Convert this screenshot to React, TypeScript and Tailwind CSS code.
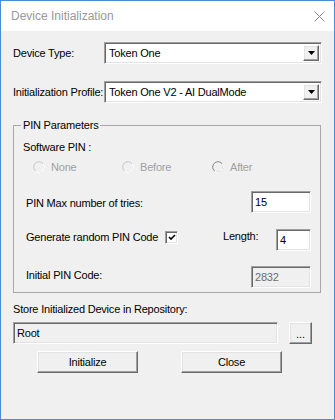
import React from "react";

const font = { fontFamily: '"Liberation Sans", Arial, sans-serif' };

const sunken =
  "border border-t-[#a0a0a0] border-l-[#a0a0a0] border-r-white border-b-white shadow-[inset_1px_1px_0_#696969,inset_-1px_-1px_0_#e3e3e3]";
const raised =
  "border border-t-white border-l-white border-r-[#696969] border-b-[#696969] shadow-[inset_-1px_-1px_0_#a0a0a0,inset_1px_1px_0_#e3e3e3]";
const txt = "text-[11px] leading-[13px] tracking-[-0.2px]";

function Combo({ value }: { value: string }) {
  return (
    <div className={`flex items-center w-[218px] h-[22px] bg-white ${sunken} pl-[4px] pr-[2px]`}>
      <span className={`flex-1 ${txt} text-black`}>{value}</span>
      <div className={`flex items-center justify-center w-[16px] h-[16px] bg-[#f0f0f0] ${raised}`}>
        <svg width="7" height="4" viewBox="0 0 7 4">
          <path d="M0 0h7L3.5 4z" fill="#000" />
        </svg>
      </div>
    </div>
  );
}

function Radio({ label, dark }: { label: string; dark?: boolean }) {
  return (
    <div className="flex items-center gap-[6px]">
      <svg width="12" height="12" viewBox="0 0 12 12">
        <circle cx="6" cy="6" r="5.3" fill="#f0f0f0" stroke={dark ? "#8a8a8a" : "#c8c8c8"} strokeWidth="1" />
        <path d="M10.2 2.8A5.3 5.3 0 0 1 2.8 10.2" fill="none" stroke="#ffffff" strokeWidth="1.2" />
      </svg>
      <span className={`${txt} text-[#a0a0a0]`}>{label}</span>
    </div>
  );
}

function Field({ value, disabled, w }: { value: string; disabled?: boolean; w: string }) {
  return (
    <div
      className={`flex items-center h-[22px] ${w} ${sunken} pl-[3px] ${
        disabled ? "bg-[#f0f0f0] text-[#6d6d6d]" : "bg-white text-black"
      }`}
    >
      <span className={txt}>{value}</span>
    </div>
  );
}

export default function App() {
  return (
    <div
      style={font}
      className="w-[335px] h-[420px] flex flex-col bg-[#f0f0f0] border border-[#4b8bd9] text-black overflow-hidden"
    >
      <div className="flex items-center justify-between h-[30px] bg-white pl-[10px] pr-[9px]">
        <span className="text-[12px] text-[#999999]">Device Initialization</span>
        <svg width="11" height="11" viewBox="0 0 11 11">
          <path d="M0.5 0.5l10 10M10.5 0.5l-10 10" stroke="#8c8c8c" strokeWidth="1" />
        </svg>
      </div>

      <div className="flex flex-col px-[12px]">
        <div className="flex items-center mt-[11px] h-[22px]">
          <span className={`w-[91px] ${txt}`}>Device Type:</span>
          <Combo value="Token One" />
        </div>
        <div className="flex items-center mt-[17px] h-[22px]">
          <span className={`w-[91px] ${txt} whitespace-nowrap`}>Initialization Profile:</span>
          <Combo value="Token One V2 - AI DualMode" />
        </div>

        <fieldset className="mt-[16px] w-[308px] border border-[#a8a8a8] px-[7px] pb-[4px] flex flex-col">
          <legend className={`px-[2px] ${txt}`}>PIN Parameters</legend>
          <span className={`mt-[9px] ml-[2px] ${txt}`}>Software PIN :</span>
          <div className="flex items-center mt-[6px] h-[14px] ml-[12px]">
            <div className="w-[89px]">
              <Radio label="None" />
            </div>
            <div className="w-[90px]">
              <Radio label="Before" />
            </div>
            <Radio label="After" dark />
          </div>
          <div className="flex items-center justify-between mt-[17px] pl-[5px] pr-[2px]">
            <span className={`${txt} mt-[2px]`}>PIN Max number of tries:</span>
            <Field value="15" w="w-[60px]" />
          </div>
          <div className="flex items-start mt-[16px] pl-[5px] pr-[2px] h-[22px]">
            <span className={`${txt} mt-[2px] w-[139px]`}>Generate random PIN Code</span>
            <div className={`mt-[2px] w-[13px] h-[13px] bg-white ${sunken} flex items-center justify-center`}>
              <svg width="8" height="7" viewBox="0 0 8 7">
                <path d="M1 3l2 2 4-4" fill="none" stroke="#000" strokeWidth="1.6" />
              </svg>
            </div>
            <span className={`${txt} mt-[1px] ml-[45px] flex-1`}>Length:</span>
            <Field value="4" w="w-[35px]" />
          </div>
          <div className="flex items-center justify-between mt-[15px] pl-[5px] pr-[2px]">
            <span className={`${txt} -mt-[3px]`}>Initial PIN Code:</span>
            <Field value="2832" disabled w="w-[60px]" />
          </div>
        </fieldset>

        <span className={`mt-[10px] ${txt}`}>Store Initialized Device in Repository:</span>
        <div className="flex items-center mt-[6px] gap-[11px]">
          <Field value="Root" disabled w="w-[265px] !text-black" />
          <div className={`flex items-end justify-center w-[23px] h-[22px] ${raised} pb-[5px]`}>
            <span className="text-[11px] leading-[8px]">...</span>
          </div>
        </div>
        <div className="flex items-center mt-[7px] ml-[24px] gap-[43px]">
          <div className={`flex items-center justify-center w-[101px] h-[22px] ${raised}`}>
            <span className={txt}>Initialize</span>
          </div>
          <div className={`flex items-center justify-center w-[101px] h-[22px] ${raised}`}>
            <span className={txt}>Close</span>
          </div>
        </div>
      </div>
    </div>
  );
}
